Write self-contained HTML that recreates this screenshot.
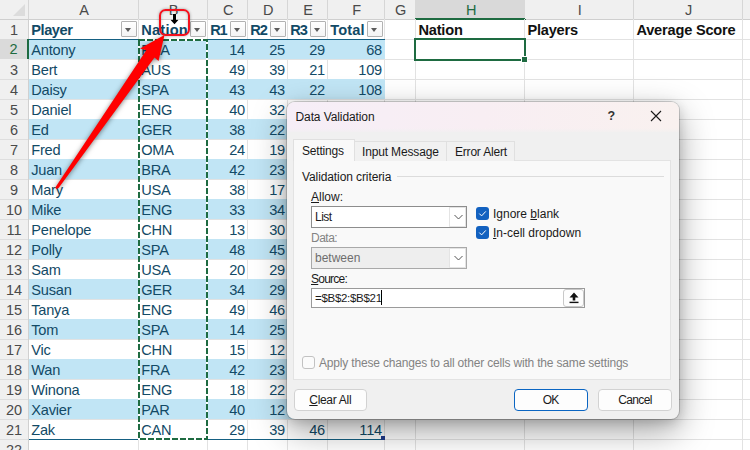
<!DOCTYPE html>
<html><head><meta charset="utf-8"><title>Data Validation</title>
<style>
html,body{margin:0;padding:0}
body{width:750px;height:450px;overflow:hidden;background:#fff;position:relative;font-family:"Liberation Sans",sans-serif;}
#sheet{position:absolute;left:0;top:0;width:750px;height:450px;overflow:hidden;background:#fff}
.abs{position:absolute}
.ch{position:absolute;top:0;height:19px;line-height:20px;text-align:center;padding-left:1.4px;font-size:14.5px;color:#4a4a4a;background:#f0f0f0;border-right:1px solid #d6d6d6;box-sizing:border-box}
.rh{position:absolute;left:0;width:28px;height:19px;line-height:20px;text-align:center;font-size:14.5px;color:#4a4a4a;background:#f0f0f0;border-bottom:1px solid #dedede;box-sizing:content-box}
.vl{position:absolute;top:19px;width:1px;height:431px;background:#e2e2e2}
.hl{position:absolute;left:28px;height:1px;width:722px;background:#e2e2e2}
.band{position:absolute;left:29px;width:355.5px;height:20px;background:#c1e5f5}
.c{position:absolute;height:19px;line-height:20px;font-size:14.6px;color:#124a66;white-space:nowrap;letter-spacing:-0.2px}
.r{text-align:right}
.b{font-weight:bold;letter-spacing:-0.45px}
.fb{position:absolute;width:16px;height:16px;box-sizing:border-box;border:1px solid #b2b2b2;background:linear-gradient(#fff,#f4f4f4);border-radius:1px}
.fb:after{content:"";position:absolute;left:3.3px;top:6px;border-left:3.7px solid transparent;border-right:3.7px solid transparent;border-top:4px solid #5c5c5c}
#dlg{position:absolute;left:287px;top:102px;width:392px;height:316.5px;border-radius:8px;background:#f0f0f0;box-shadow:0 0 0 1px rgba(0,0,0,.16),0 12px 34px rgba(0,0,0,.36),0 3px 12px rgba(0,0,0,.16);font-size:12px;color:#1a1a1a;overflow:hidden}
#dlg .t{position:absolute;white-space:nowrap;line-height:14px}
u{text-decoration:underline;text-underline-offset:1px}
</style></head><body>
<div id="sheet">

<div class="abs" style="left:0;top:0;width:750px;height:19px;background:#f0f0f0"></div>
<div class="abs" style="left:0;top:19px;width:750px;height:1px;background:#cfcfcf"></div>
<div class="ch" style="left:29px;width:110px">A</div>
<div class="ch" style="left:139px;width:69px">B</div>
<div class="ch" style="left:208px;width:40px">C</div>
<div class="ch" style="left:248px;width:40px">D</div>
<div class="ch" style="left:288px;width:40px">E</div>
<div class="ch" style="left:328px;width:57px">F</div>
<div class="ch" style="left:385px;width:31px">G</div>
<div class="ch" style="left:415px;width:111px;border-right:none;background:#d9d9d9;color:#1e6b41;border-bottom:2px solid #1e6b41;height:20px">H</div>
<div class="ch" style="left:525px;width:109px">I</div>
<div class="ch" style="left:634px;width:109px">J</div>
<div class="ch" style="left:743px;width:18px"></div>
<div class="abs" style="left:0;top:0;width:28px;height:19px;background:#f0f0f0;border-right:1px solid #d6d6d6"></div>
<svg class="abs" style="left:13px;top:4px" width="12" height="12"><polygon points="12,0 12,12 0,12" fill="#dcdcdc"/></svg>
<div class="vl" style="left:138px"></div>
<div class="vl" style="left:207px"></div>
<div class="vl" style="left:247px"></div>
<div class="vl" style="left:287px"></div>
<div class="vl" style="left:327px"></div>
<div class="vl" style="left:384px"></div>
<div class="vl" style="left:415px"></div>
<div class="vl" style="left:524px"></div>
<div class="vl" style="left:633px"></div>
<div class="vl" style="left:742px"></div>
<div class="vl" style="left:760px"></div>
<div class="hl" style="top:39px"></div>
<div class="hl" style="top:59px"></div>
<div class="hl" style="top:79px"></div>
<div class="hl" style="top:99px"></div>
<div class="hl" style="top:119px"></div>
<div class="hl" style="top:139px"></div>
<div class="hl" style="top:159px"></div>
<div class="hl" style="top:179px"></div>
<div class="hl" style="top:199px"></div>
<div class="hl" style="top:219px"></div>
<div class="hl" style="top:239px"></div>
<div class="hl" style="top:259px"></div>
<div class="hl" style="top:279px"></div>
<div class="hl" style="top:299px"></div>
<div class="hl" style="top:319px"></div>
<div class="hl" style="top:339px"></div>
<div class="hl" style="top:359px"></div>
<div class="hl" style="top:379px"></div>
<div class="hl" style="top:399px"></div>
<div class="hl" style="top:419px"></div>
<div class="hl" style="top:439px"></div>
<div class="hl" style="top:459px"></div>
<div class="band" style="top:39px"></div>
<div class="band" style="top:79px"></div>
<div class="band" style="top:119px"></div>
<div class="band" style="top:159px"></div>
<div class="band" style="top:199px"></div>
<div class="band" style="top:239px"></div>
<div class="band" style="top:279px"></div>
<div class="band" style="top:319px"></div>
<div class="band" style="top:359px"></div>
<div class="band" style="top:399px"></div>
<div class="abs" style="left:29px;top:39px;width:355.5px;height:1px;background:#156082"></div>
<div class="abs" style="left:29px;top:439px;width:355.5px;height:1px;background:#156082"></div>
<div class="abs" style="left:381px;top:436px;width:4px;height:4px;background:#1f3a8a"></div>
<div class="abs" style="left:0;top:20px;width:28px;height:430px;background:#f0f0f0;border-right:1px solid #d0d0d0"></div>
<div class="rh" style="top:20px">1</div>
<div class="rh" style="top:39px;background:#dadada;color:#1e6b41;width:27px;border-right:2px solid #1e6b41;height:20px;border-bottom:none">2</div>
<div class="rh" style="top:60px">3</div>
<div class="rh" style="top:80px">4</div>
<div class="rh" style="top:100px">5</div>
<div class="rh" style="top:120px">6</div>
<div class="rh" style="top:140px">7</div>
<div class="rh" style="top:160px">8</div>
<div class="rh" style="top:180px">9</div>
<div class="rh" style="top:200px">10</div>
<div class="rh" style="top:220px">11</div>
<div class="rh" style="top:240px">12</div>
<div class="rh" style="top:260px">13</div>
<div class="rh" style="top:280px">14</div>
<div class="rh" style="top:300px">15</div>
<div class="rh" style="top:320px">16</div>
<div class="rh" style="top:340px">17</div>
<div class="rh" style="top:360px">18</div>
<div class="rh" style="top:380px">19</div>
<div class="rh" style="top:400px">20</div>
<div class="rh" style="top:420px">21</div>
<div class="rh" style="top:440px">22</div>
<div class="c b" style="left:31.3px;top:20.4px;letter-spacing:-0.45px">Player</div>
<div class="fb" style="left:121px;top:21px"></div>
<div class="c b" style="left:141.3px;top:20.4px;letter-spacing:0.2px">Nation</div>
<div class="fb" style="left:190px;top:21px"></div>
<div class="c b" style="left:210.3px;top:20.4px;letter-spacing:-1.4px">R1</div>
<div class="fb" style="left:230px;top:21px"></div>
<div class="c b" style="left:250.3px;top:20.4px;letter-spacing:-1.2px">R2</div>
<div class="fb" style="left:270px;top:21px"></div>
<div class="c b" style="left:290.3px;top:20.4px;letter-spacing:-1.2px">R3</div>
<div class="fb" style="left:310px;top:21px"></div>
<div class="c b" style="left:330.3px;top:20.4px;letter-spacing:0.1px">Total</div>
<div class="fb" style="left:367px;top:21px"></div>
<div class="c b" style="left:418.4px;top:20.4px;color:#111;letter-spacing:-0.2px">Nation</div>
<div class="c b" style="left:527.4px;top:20.4px;color:#111;letter-spacing:-0.2px">Players</div>
<div class="c b" style="left:636.4px;top:20.4px;color:#111;letter-spacing:-0.2px">Average Score</div>
<div class="c" style="left:31.2px;top:40.4px">Antony</div>
<div class="c" style="left:141.2px;top:40.4px">FRA</div>
<div class="c r" style="left:205px;width:40px;top:40.4px">14</div>
<div class="c r" style="left:245px;width:40px;top:40.4px">25</div>
<div class="c r" style="left:285px;width:40px;top:40.4px">29</div>
<div class="c r" style="left:342px;width:40px;top:40.4px">68</div>
<div class="c" style="left:31.2px;top:60.4px">Bert</div>
<div class="c" style="left:141.2px;top:60.4px">AUS</div>
<div class="c r" style="left:205px;width:40px;top:60.4px">49</div>
<div class="c r" style="left:245px;width:40px;top:60.4px">39</div>
<div class="c r" style="left:285px;width:40px;top:60.4px">21</div>
<div class="c r" style="left:342px;width:40px;top:60.4px">109</div>
<div class="c" style="left:31.2px;top:80.4px">Daisy</div>
<div class="c" style="left:141.2px;top:80.4px">SPA</div>
<div class="c r" style="left:205px;width:40px;top:80.4px">43</div>
<div class="c r" style="left:245px;width:40px;top:80.4px">43</div>
<div class="c r" style="left:285px;width:40px;top:80.4px">22</div>
<div class="c r" style="left:342px;width:40px;top:80.4px">108</div>
<div class="c" style="left:31.2px;top:100.4px">Daniel</div>
<div class="c" style="left:141.2px;top:100.4px">ENG</div>
<div class="c r" style="left:205px;width:40px;top:100.4px">40</div>
<div class="c r" style="left:245px;width:40px;top:100.4px">32</div>
<div class="c r" style="left:285px;width:40px;top:100.4px">31</div>
<div class="c r" style="left:342px;width:40px;top:100.4px">103</div>
<div class="c" style="left:31.2px;top:120.4px">Ed</div>
<div class="c" style="left:141.2px;top:120.4px">GER</div>
<div class="c r" style="left:205px;width:40px;top:120.4px">38</div>
<div class="c r" style="left:245px;width:40px;top:120.4px">22</div>
<div class="c r" style="left:285px;width:40px;top:120.4px">40</div>
<div class="c r" style="left:342px;width:40px;top:120.4px">100</div>
<div class="c" style="left:31.2px;top:140.4px">Fred</div>
<div class="c" style="left:141.2px;top:140.4px">OMA</div>
<div class="c r" style="left:205px;width:40px;top:140.4px">24</div>
<div class="c r" style="left:245px;width:40px;top:140.4px">19</div>
<div class="c r" style="left:285px;width:40px;top:140.4px">36</div>
<div class="c r" style="left:342px;width:40px;top:140.4px">79</div>
<div class="c" style="left:31.2px;top:160.4px">Juan</div>
<div class="c" style="left:141.2px;top:160.4px">BRA</div>
<div class="c r" style="left:205px;width:40px;top:160.4px">42</div>
<div class="c r" style="left:245px;width:40px;top:160.4px">23</div>
<div class="c r" style="left:285px;width:40px;top:160.4px">28</div>
<div class="c r" style="left:342px;width:40px;top:160.4px">93</div>
<div class="c" style="left:31.2px;top:180.4px">Mary</div>
<div class="c" style="left:141.2px;top:180.4px">USA</div>
<div class="c r" style="left:205px;width:40px;top:180.4px">38</div>
<div class="c r" style="left:245px;width:40px;top:180.4px">17</div>
<div class="c r" style="left:285px;width:40px;top:180.4px">44</div>
<div class="c r" style="left:342px;width:40px;top:180.4px">99</div>
<div class="c" style="left:31.2px;top:200.4px">Mike</div>
<div class="c" style="left:141.2px;top:200.4px">ENG</div>
<div class="c r" style="left:205px;width:40px;top:200.4px">33</div>
<div class="c r" style="left:245px;width:40px;top:200.4px">34</div>
<div class="c r" style="left:285px;width:40px;top:200.4px">25</div>
<div class="c r" style="left:342px;width:40px;top:200.4px">92</div>
<div class="c" style="left:31.2px;top:220.4px">Penelope</div>
<div class="c" style="left:141.2px;top:220.4px">CHN</div>
<div class="c r" style="left:205px;width:40px;top:220.4px">13</div>
<div class="c r" style="left:245px;width:40px;top:220.4px">30</div>
<div class="c r" style="left:285px;width:40px;top:220.4px">41</div>
<div class="c r" style="left:342px;width:40px;top:220.4px">84</div>
<div class="c" style="left:31.2px;top:240.4px">Polly</div>
<div class="c" style="left:141.2px;top:240.4px">SPA</div>
<div class="c r" style="left:205px;width:40px;top:240.4px">48</div>
<div class="c r" style="left:245px;width:40px;top:240.4px">45</div>
<div class="c r" style="left:285px;width:40px;top:240.4px">19</div>
<div class="c r" style="left:342px;width:40px;top:240.4px">112</div>
<div class="c" style="left:31.2px;top:260.4px">Sam</div>
<div class="c" style="left:141.2px;top:260.4px">USA</div>
<div class="c r" style="left:205px;width:40px;top:260.4px">20</div>
<div class="c r" style="left:245px;width:40px;top:260.4px">29</div>
<div class="c r" style="left:285px;width:40px;top:260.4px">33</div>
<div class="c r" style="left:342px;width:40px;top:260.4px">82</div>
<div class="c" style="left:31.2px;top:280.4px">Susan</div>
<div class="c" style="left:141.2px;top:280.4px">GER</div>
<div class="c r" style="left:205px;width:40px;top:280.4px">34</div>
<div class="c r" style="left:245px;width:40px;top:280.4px">29</div>
<div class="c r" style="left:285px;width:40px;top:280.4px">27</div>
<div class="c r" style="left:342px;width:40px;top:280.4px">90</div>
<div class="c" style="left:31.2px;top:300.4px">Tanya</div>
<div class="c" style="left:141.2px;top:300.4px">ENG</div>
<div class="c r" style="left:205px;width:40px;top:300.4px">49</div>
<div class="c r" style="left:245px;width:40px;top:300.4px">46</div>
<div class="c r" style="left:285px;width:40px;top:300.4px">12</div>
<div class="c r" style="left:342px;width:40px;top:300.4px">107</div>
<div class="c" style="left:31.2px;top:320.4px">Tom</div>
<div class="c" style="left:141.2px;top:320.4px">SPA</div>
<div class="c r" style="left:205px;width:40px;top:320.4px">14</div>
<div class="c r" style="left:245px;width:40px;top:320.4px">25</div>
<div class="c r" style="left:285px;width:40px;top:320.4px">38</div>
<div class="c r" style="left:342px;width:40px;top:320.4px">77</div>
<div class="c" style="left:31.2px;top:340.4px">Vic</div>
<div class="c" style="left:141.2px;top:340.4px">CHN</div>
<div class="c r" style="left:205px;width:40px;top:340.4px">15</div>
<div class="c r" style="left:245px;width:40px;top:340.4px">12</div>
<div class="c r" style="left:285px;width:40px;top:340.4px">47</div>
<div class="c r" style="left:342px;width:40px;top:340.4px">74</div>
<div class="c" style="left:31.2px;top:360.4px">Wan</div>
<div class="c" style="left:141.2px;top:360.4px">FRA</div>
<div class="c r" style="left:205px;width:40px;top:360.4px">42</div>
<div class="c r" style="left:245px;width:40px;top:360.4px">23</div>
<div class="c r" style="left:285px;width:40px;top:360.4px">30</div>
<div class="c r" style="left:342px;width:40px;top:360.4px">95</div>
<div class="c" style="left:31.2px;top:380.4px">Winona</div>
<div class="c" style="left:141.2px;top:380.4px">ENG</div>
<div class="c r" style="left:205px;width:40px;top:380.4px">18</div>
<div class="c r" style="left:245px;width:40px;top:380.4px">22</div>
<div class="c r" style="left:285px;width:40px;top:380.4px">26</div>
<div class="c r" style="left:342px;width:40px;top:380.4px">66</div>
<div class="c" style="left:31.2px;top:400.4px">Xavier</div>
<div class="c" style="left:141.2px;top:400.4px">PAR</div>
<div class="c r" style="left:205px;width:40px;top:400.4px">40</div>
<div class="c r" style="left:245px;width:40px;top:400.4px">12</div>
<div class="c r" style="left:285px;width:40px;top:400.4px">35</div>
<div class="c r" style="left:342px;width:40px;top:400.4px">87</div>
<div class="c" style="left:31.2px;top:420.4px">Zak</div>
<div class="c" style="left:141.2px;top:420.4px">CAN</div>
<div class="c r" style="left:205px;width:40px;top:420.4px">29</div>
<div class="c r" style="left:245px;width:40px;top:420.4px">39</div>
<div class="c r" style="left:285px;width:40px;top:420.4px">46</div>
<div class="c r" style="left:342px;width:40px;top:420.4px">114</div>
<div class="abs" style="left:414px;top:38px;width:108px;height:19px;border:2px solid #1e6b41"></div>
<div class="abs" style="left:521px;top:56px;width:5px;height:5px;background:#1e6b41;border:1px solid #fff"></div>
<svg class="abs" style="left:137px;top:38px" width="72" height="403"><rect x="2" y="2" width="68" height="399" fill="none" stroke="#fff" stroke-width="2"/><rect x="2" y="2" width="68" height="399" fill="none" stroke="#1e6b41" stroke-width="2" stroke-dasharray="6 2"/></svg>
<div class="abs" style="left:158.8px;top:8.8px;width:27.4px;height:23.4px;border:2.4px solid #f5111d;border-radius:6.5px;box-shadow:0 0 3px rgba(0,0,0,.35), inset 0 0 3px rgba(0,0,0,.3)"></div>
<svg class="abs" style="left:165px;top:10px" width="20" height="18" viewBox="165 10 20 18"><path d="M173 14h3v5.7h2.6l-4.1 4.6l-4.1-4.6h2.6z" fill="#000" stroke="#fff" stroke-width="1" stroke-linejoin="miter" paint-order="stroke"/></svg>
<svg class="abs" style="left:0;top:0;filter:drop-shadow(0 1px 2.5px rgba(0,0,0,.5))" width="300" height="220"><polygon points="164.5,35 140,48.5 146.3,50.3 55.3,187.6 56.4,189 58.6,188 154.5,57.5 158.5,61" fill="#ff0000"/></svg>
</div>
<div id="dlg">
<div class="abs" style="left:0;top:0;width:392px;height:30px;background:linear-gradient(90deg,#f6eef7 0%,#f8eef3 50%,#f9f1ef 100%)"></div>
<div class="abs" style="left:0;top:26px;width:392px;height:8px;background:linear-gradient(180deg,rgba(240,240,240,0),#f0f0f0 70%)"></div>
<div class="t" style="left:8.5px;top:8px;font-size:12px;letter-spacing:-0.1px">Data Validation</div>
<div class="t" style="left:320.5px;top:7px;font-size:12.5px;font-weight:bold;color:#333">?</div>
<svg class="abs" style="left:363px;top:8px" width="12" height="12"><path d="M1 1L11 11M11 1L1 11" stroke="#1a1a1a" stroke-width="1.1" fill="none"/></svg>
<!-- tab panel -->
<div class="abs" style="left:6px;top:58px;width:378px;height:220px;box-sizing:border-box;background:#f9f9f9;border:1px solid #e3e3e3"></div>
<!-- tabs -->
<div class="abs" style="left:67px;top:39px;width:93px;height:20px;box-sizing:border-box;background:#f1f1f1;border:1px solid #e0e0e0;border-bottom:none"></div>
<div class="abs" style="left:159px;top:39px;width:69px;height:20px;box-sizing:border-box;background:#f1f1f1;border:1px solid #e0e0e0;border-bottom:none"></div>
<div class="abs" style="left:6px;top:37px;width:62px;height:22px;box-sizing:border-box;background:#f9f9f9;border:1px solid #e0e0e0;border-bottom:none"></div>
<div class="t" style="left:15px;top:42px;letter-spacing:-0.2px">Settings</div>
<div class="t" style="left:75px;top:43px;letter-spacing:-0.15px">Input Message</div>
<div class="t" style="left:168px;top:43px;letter-spacing:-0.2px">Error Alert</div>
<!-- group -->
<div class="t" style="left:15px;top:68.3px;letter-spacing:-0.1px">Validation criteria</div>
<div class="abs" style="left:110px;top:74px;width:267px;height:1px;background:#dcdcdc"></div>
<div class="t" style="left:24px;top:88px"><u>A</u>llow:</div>
<div class="abs" style="left:24px;top:104px;width:156px;height:22px;box-sizing:border-box;background:#fff;border:1px solid #8d8d8d"></div>
<div class="abs" style="left:162px;top:105px;width:17px;height:20px;box-sizing:border-box;background:#fff;border:1px solid #e4e4e4"></div>
<svg class="abs" style="left:166px;top:111px" width="11" height="8"><path d="M1.5 2L5.5 6L9.5 2" stroke="#555" stroke-width="1" fill="none"/></svg>
<div class="t" style="left:28px;top:108px;letter-spacing:-0.5px">List</div>
<div class="t" style="left:24px;top:129px;color:#838383;letter-spacing:-0.5px">Data:</div>
<div class="abs" style="left:24px;top:145px;width:156px;height:22px;box-sizing:border-box;background:#eeeeee;border:1px solid #a9a9a9"></div>
<div class="abs" style="left:162px;top:146px;width:17px;height:20px;box-sizing:border-box;background:#fff;border:1px solid #e4e4e4"></div>
<svg class="abs" style="left:166px;top:152px" width="11" height="8"><path d="M1.5 2L5.5 6L9.5 2" stroke="#555" stroke-width="1" fill="none"/></svg>
<div class="t" style="left:28px;top:149px;color:#6d6d6d">between</div>
<div class="t" style="left:24px;top:170px;letter-spacing:-0.75px"><u>S</u>ource:</div>
<div class="abs" style="left:24px;top:186px;width:274px;height:20px;box-sizing:border-box;background:#fff;border:1px solid #9a9a9a"></div>
<div class="t" style="left:28px;top:189px;font-size:11.5px;letter-spacing:-0.3px">=$B$2:$B$21</div>
<div class="abs" style="left:94px;top:188px;width:1px;height:15px;background:#000"></div>
<div class="abs" style="left:276px;top:187px;width:21px;height:18px;box-sizing:border-box;background:#fdfdfd;border:1px solid #c8c8c8;border-radius:3px"></div>
<svg class="abs" style="left:281px;top:190px" width="12" height="12" viewBox="0 0 12 12"><path d="M6 0.5L10.5 5.5H7.3V8.5H4.7V5.5H1.5Z" fill="#111"/><rect x="1.5" y="9.7" width="9" height="1.4" fill="#111"/></svg>
<!-- checkboxes -->
<div class="abs" style="left:189px;top:105px;width:13px;height:13px;background:#1261c0;border-radius:3px"></div>
<svg class="abs" style="left:189px;top:105px" width="13" height="13"><path d="M3.3 6.6L5.6 8.9L9.8 4.4" stroke="#fff" stroke-width="1" fill="none"/></svg>
<div class="t" style="left:206px;top:105px">Ignore <u>b</u>lank</div>
<div class="abs" style="left:189px;top:124px;width:13px;height:13px;background:#1261c0;border-radius:3px"></div>
<svg class="abs" style="left:189px;top:124px" width="13" height="13"><path d="M3.3 6.6L5.6 8.9L9.8 4.4" stroke="#fff" stroke-width="1" fill="none"/></svg>
<div class="t" style="left:206px;top:124px"><u>I</u>n-cell dropdown</div>
<!-- apply -->
<div class="abs" style="left:15px;top:254px;width:13px;height:13px;box-sizing:border-box;background:#fbfbfb;border:1px solid #c2c2c2;border-radius:3px"></div>
<div class="t" style="left:32px;top:254px;color:#838383;letter-spacing:-0.18px">Apply these changes to all other cells with the same settings</div>
<!-- buttons -->
<div class="abs" style="left:6.5px;top:286.5px;width:73.5px;height:22.5px;box-sizing:border-box;background:#fdfdfd;border:1px solid #d2d2d2;border-radius:4px;text-align:center;line-height:20px;letter-spacing:-0.3px"><u>C</u>lear All</div>
<div class="abs" style="left:227px;top:286.5px;width:74px;height:22.5px;box-sizing:border-box;background:#fdfdfd;border:1.5px solid #0a65c2;border-radius:4px;text-align:center;line-height:20.5px;letter-spacing:-1px;text-indent:-1px">OK</div>
<div class="abs" style="left:311px;top:286.5px;width:74px;height:22.5px;box-sizing:border-box;background:#fdfdfd;border:1px solid #d2d2d2;border-radius:4px;text-align:center;line-height:20px;letter-spacing:-0.65px">Cancel</div>
</div>

</body></html>
